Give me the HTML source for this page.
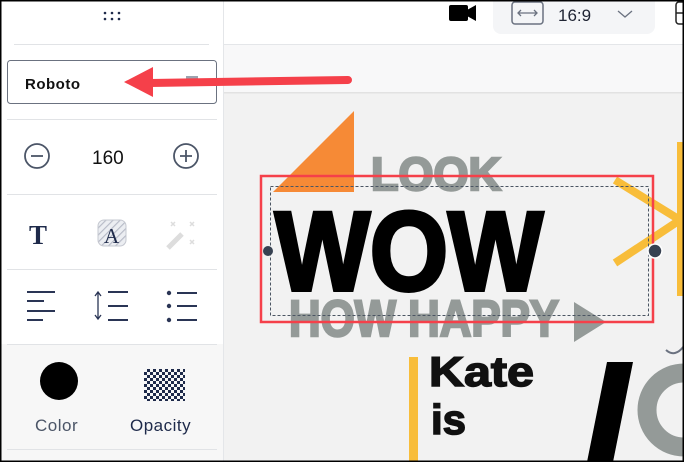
<!DOCTYPE html>
<html><head><meta charset="utf-8"><style>
*{margin:0;padding:0;box-sizing:border-box}
body{width:684px;height:462px;overflow:hidden;background:#fff;font-family:"Liberation Sans",sans-serif;position:relative}
.abs{position:absolute}
text.b{font-weight:700}
</style></head><body>
<svg class="abs" style="left:0;top:0" width="684" height="462" viewBox="0 0 684 462" font-family="Liberation Sans, sans-serif">
<rect x="224" y="0" width="460" height="45" fill="#fff"/>
<rect x="224" y="45" width="460" height="48" fill="#f8f8f9"/>
<rect x="224" y="44" width="460" height="1" fill="#e4e6e9"/>
<rect x="224" y="93" width="460" height="369" fill="#f2f2f2"/>
<rect x="224" y="92" width="460" height="1.5" fill="#e2e2e2"/>
<rect x="449" y="5" width="19" height="16" rx="2" fill="#000"/>
<path d="M467 10 L476 5 L476 21 L467 16Z" fill="#000"/>
<rect x="493" y="-6" width="162" height="40" rx="8" fill="#f4f5f7"/>
<rect x="512" y="2" width="31" height="22" rx="3" fill="none" stroke="#6b7280" stroke-width="1.5"/>
<path d="M518 13 H537 M521 10 L518 13 L521 16 M534 10 L537 13 L534 16" stroke="#6b7280" stroke-width="1.3" fill="none"/>
<text x="558" y="21" font-size="17" fill="#1f2433">16:9</text>
<path d="M618 11 L625 17 L632 11" stroke="#6b7280" stroke-width="1.3" fill="none"/>
<rect x="676" y="2" width="12" height="22" rx="3" fill="none" stroke="#222" stroke-width="1.5"/>
<line x1="676" y1="13" x2="684" y2="13" stroke="#222" stroke-width="1.5"/>
<path d="M273 192 L354 111 L354 192Z" fill="#f68a36"/>
<text class="b" x="371" y="190" font-size="46" fill="#949a98" stroke="#949a98" stroke-width="2.5" textLength="130" lengthAdjust="spacingAndGlyphs">LOOK</text>
<text class="b" x="289" y="336" font-size="51" fill="#949a98" stroke="#949a98" stroke-width="2.5" textLength="270" lengthAdjust="spacingAndGlyphs">HOW HAPPY</text>
<path d="M574 302 L606 322 L574 342Z" fill="#949a98"/>
<rect x="677" y="142" width="7" height="154" fill="#f8bd3a"/>
<path d="M615 180 L680 220 L615 263" stroke="#f8bd3a" stroke-width="8" fill="none"/>
<text class="b" x="275" y="290" font-size="112" fill="#000" stroke="#000" stroke-width="4" textLength="268" lengthAdjust="spacingAndGlyphs">WOW</text>
<rect x="261" y="176" width="392" height="146" fill="none" stroke="#f5404a" stroke-width="2.5"/>
<rect x="270.5" y="186.5" width="378" height="129" fill="none" stroke="#4b5563" stroke-width="1" stroke-dasharray="3,2"/>
<circle cx="268" cy="251" r="5" fill="#374151"/>
<circle cx="655" cy="251" r="7" fill="#374151" stroke="#fff" stroke-width="1.5"/>
<path d="M666 350 Q675 358 684 346" stroke="#6b7280" stroke-width="2" fill="none"/>
<rect x="409" y="357" width="9" height="105" fill="#f8bd3a"/>
<text class="b" x="429" y="386" font-size="42" fill="#111" stroke="#111" stroke-width="1.5" textLength="105" lengthAdjust="spacingAndGlyphs">Kate</text>
<text class="b" x="431" y="434" font-size="42" fill="#111" stroke="#111" stroke-width="1.5">is</text>
<path d="M607 362 L633 362 L613 462 L587 462Z" fill="#000"/>
<circle cx="684" cy="410" r="37" fill="none" stroke="#949a98" stroke-width="19"/>
</svg>
<div class="abs" style="left:0;top:0;width:224px;height:462px;background:#fff;border-right:1px solid #e4e6e9"></div>
<svg class="abs" style="left:0;top:0" width="224" height="462" font-family="Liberation Sans, sans-serif">
<defs>
<pattern id="ch" width="6" height="6" patternUnits="userSpaceOnUse"><rect width="3" height="3" fill="#1e2a4a"/><rect x="3" y="3" width="3" height="3" fill="#1e2a4a"/></pattern>
<pattern id="hat" width="5" height="5" patternUnits="userSpaceOnUse" patternTransform="rotate(-45)"><rect width="5" height="5" fill="#eceef2"/><rect width="5" height="1.2" fill="#b8bcc8"/></pattern>
</defs>
<rect x="0" y="344" width="223" height="118" fill="#f7f7f7"/>
<g fill="#1e2a4a"><circle cx="105" cy="13" r="1.3"/><circle cx="112" cy="13" r="1.3"/><circle cx="119" cy="13" r="1.3"/><circle cx="105" cy="19" r="1.3"/><circle cx="112" cy="19" r="1.3"/><circle cx="119" cy="19" r="1.3"/></g>
<g fill="#e1e3e6"><rect x="14" y="44" width="195" height="1"/><rect x="7" y="119" width="210" height="1"/><rect x="7" y="194" width="210" height="1"/><rect x="7" y="269" width="210" height="1"/><rect x="7" y="344" width="210" height="1"/><rect x="7" y="449" width="210" height="1"/></g>
<rect x="7.5" y="60.5" width="209" height="43" rx="3" fill="#fff" stroke="#6b7280"/>
<text class="b" x="25" y="89" font-size="15" fill="#111" letter-spacing="0.5">Roboto</text>
<rect x="186" y="76" width="12" height="3" fill="#9ca3af"/>
<circle cx="37" cy="156" r="12" fill="none" stroke="#4b5567" stroke-width="1.8"/><path d="M31 156 H43" stroke="#4b5567" stroke-width="1.8"/>
<circle cx="186" cy="156" r="12" fill="none" stroke="#4b5567" stroke-width="1.8"/><path d="M180 156 H192 M186 150 V162" stroke="#4b5567" stroke-width="1.8"/>
<text x="92" y="164" font-size="19" fill="#111">160</text>
<text class="b" x="29" y="244" font-size="27" fill="#1e2a4a" font-family="Liberation Serif, serif">T</text>
<rect x="98" y="220" width="28" height="26" rx="6" fill="url(#hat)" stroke="#c5c8d0"/>
<text x="104" y="243" font-size="21" fill="#1e2a4a" font-family="Liberation Serif, serif">A</text>
<path d="M168 248 L182 234" stroke="#ddd" stroke-width="5"/>
<g stroke="#ddd" stroke-width="1.5"><path d="M171 222 l4 4 m0 -4 l-4 4 M190 222 l4 4 m0 -4 l-4 4 M190 240 l4 4 m0 -4 l-4 4"/></g>
<g stroke="#2a3555" stroke-width="2"><path d="M27 292 H55 M27 301 H44 M27 311 H55 M27 320 H43"/><path d="M108 292 H128 M108 306 H128 M108 320 H128"/><path d="M98 293 V318 M95 296 L98 292 L101 296 M95 315 L98 319 L101 315" stroke-width="1.3" fill="none"/><path d="M177 293 H197 M177 306 H197 M177 320 H197"/></g>
<g fill="#2a3555"><circle cx="169" cy="293" r="2.2"/><circle cx="169" cy="306" r="2.2"/><circle cx="169" cy="320" r="2.2"/></g>
<circle cx="59" cy="381" r="19" fill="#000"/>
<rect x="144" y="369" width="41" height="32" fill="url(#ch)"/>
<text x="35" y="431" font-size="17" fill="#4b5567" letter-spacing="0.5">Color</text>
<text x="130" y="431" font-size="17" fill="#1e2a4a" letter-spacing="0.5">Opacity</text>
</svg>
<svg class="abs" style="left:0;top:0" width="684" height="462">
<path d="M150 83 L348 80" stroke="#f5404a" stroke-width="8" stroke-linecap="round"/>
<path d="M124 82 L153 67 L153 97Z" fill="#f5404a"/>
<rect x="0.75" y="0.75" width="682.5" height="460.5" fill="none" stroke="#000" stroke-width="1.5"/></svg>
</body></html>
